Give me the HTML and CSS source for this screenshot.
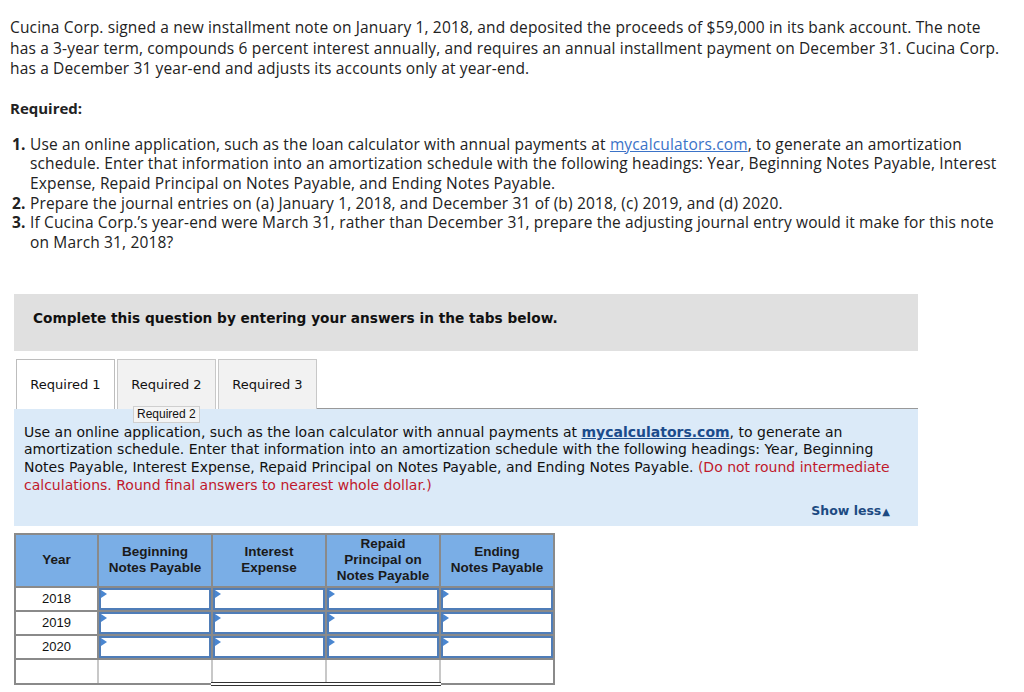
FILE: index.html
```html
<!DOCTYPE html>
<html>
<head>
<meta charset="utf-8">
<link rel="stylesheet" href="styles.css">
</head>
<body>
<div class="page">
  <p class="intro">Cucina Corp. signed a new installment note on January 1, 2018, and deposited the proceeds of $59,000 in its bank account. The note has a 3-year term, compounds 6 percent interest annually, and requires an annual installment payment on December 31. Cucina Corp. has a December 31 year-end and adjusts its accounts only at year-end.</p>
  <p class="req-title">Required:</p>
  <ol class="req-list">
    <li><span class="num">1.</span><span>Use an online application, such as the loan calculator with annual payments at <a class="link">mycalculators.com</a>, to generate an amortization schedule. Enter that information into an amortization schedule with the following headings: Year, Beginning Notes Payable, Interest Expense, Repaid Principal on Notes Payable, and Ending Notes Payable.</span></li>
    <li><span class="num">2.</span><span>Prepare the journal entries on (a) January 1, 2018, and December 31 of (b) 2018, (c) 2019, and (d) 2020.</span></li>
    <li><span class="num">3.</span><span>If Cucina Corp.’s year-end were March 31, rather than December 31, prepare the adjusting journal entry would it make for this note on March 31, 2018?</span></li>
  </ol>

  <div class="banner">Complete this question by entering your answers in the tabs below.</div>

  <div class="tabs">
    <div class="tab active">Required 1</div>
    <div class="tab">Required 2</div>
    <div class="tab">Required 3</div>
    <div class="tab-fill"></div>
  </div>

  <div class="panel">
    <div class="tooltip">Required 2</div>
    <p class="panel-text">Use an online application, such as the loan calculator with annual payments at <a class="panel-link">mycalculators.com</a>, to generate an amortization schedule. Enter that information into an amortization schedule with the following headings: Year, Beginning Notes Payable, Interest Expense, Repaid Principal on Notes Payable, and Ending Notes Payable. <span class="red">(Do not round intermediate calculations. Round final answers to nearest whole dollar.)</span></p>
    <div class="show-less">Show less<span class="tri">▲</span></div>
  </div>

  <table class="sched">
    <thead>
      <tr>
        <th class="c-year">Year</th>
        <th class="c-num">Beginning<br>Notes Payable</th>
        <th class="c-num">Interest<br>Expense</th>
        <th class="c-num">Repaid<br>Principal on<br>Notes Payable</th>
        <th class="c-num">Ending<br>Notes Payable</th>
      </tr>
    </thead>
    <tbody>
      <tr>
        <td class="yr">2018</td>
        <td class="in"><div class="box"></div></td>
        <td class="in"><div class="box"></div></td>
        <td class="in"><div class="box"></div></td>
        <td class="in"><div class="box"></div></td>
      </tr>
      <tr>
        <td class="yr">2019</td>
        <td class="in"><div class="box"></div></td>
        <td class="in"><div class="box"></div></td>
        <td class="in"><div class="box"></div></td>
        <td class="in"><div class="box"></div></td>
      </tr>
      <tr>
        <td class="yr">2020</td>
        <td class="in"><div class="box"></div></td>
        <td class="in"><div class="box"></div></td>
        <td class="in"><div class="box"></div></td>
        <td class="in"><div class="box"></div></td>
      </tr>
      <tr class="total">
        <td></td>
        <td></td>
        <td class="tot"></td>
        <td class="tot"></td>
        <td></td>
      </tr>
    </tbody>
  </table>
</div>
</body>
</html>
```

FILE: styles.css
```css
* { box-sizing: border-box; }
html, body { margin: 0; padding: 0; background: #fff; }
body {
  font-family: "Open Sans", "Liberation Sans", sans-serif;
  color: #222;
}
.page {
  width: 1024px;
  padding: 17px 0 0 0;
}
.intro {
  margin: 0 0 0 10px;
  width: 1000px;
  font-size: 15.5px;
  letter-spacing: 0.15px;
  line-height: 20.5px;
}
.req-title {
  margin: 19px 0 0 10px;
  font-weight: 700;
  font-size: 15px;
  line-height: 20px;
}
.req-list {
  list-style: none;
  margin: 17px 0 0 0;
  padding: 0 0 0 12px;
  width: 1004px;
  font-size: 15.5px;
  letter-spacing: 0.15px;
  line-height: 19.7px;
}
.req-list li {
  display: flex;
}
.num {
  font-weight: 700;
  width: 18px;
  flex: none;
}
.link {
  color: #3b73c8;
  text-decoration: underline;
}
.banner {
  margin: 41px 0 0 14px;
  width: 904px;
  height: 57px;
  background: #e0e0e0;
  font-family: "DejaVu Sans", Verdana, sans-serif;
  font-weight: 700;
  font-size: 13.7px;
  color: #111;
  padding: 16px 0 0 19px;
}
.tabs {
  display: flex;
  margin: 8px 0 0 16px;
  width: 902px;
  height: 50px;
  gap: 2px;
}
.tab {
  width: 99px;
  border: 1px solid #c8c8c8;
  border-bottom: none;
  background: #f2f2f2;
  font-family: "DejaVu Sans", Verdana, sans-serif;
  font-size: 13px;
  color: #111;
  padding-top: 17px;
  text-align: center;
}
.tab.active {
  background: #fff;
  border-color: #bdbdbd;
}
.tab-fill {
  flex: 1;
  border-bottom: 1px solid #999;
  margin-left: -2px;
}
.panel {
  position: relative;
  margin: 0 0 0 14px;
  width: 904px;
  height: 117px;
  background: #dbeaf8;
  padding: 15px 0 0 10px;
  font-family: "DejaVu Sans", Verdana, sans-serif;
  font-size: 14px;
  color: #111;
}
.tooltip {
  position: absolute;
  left: 119px;
  top: -3px;
  height: 17px;
  padding: 0 3px;
  background: #f4f4f4;
  border: 1px solid #cfcfcf;
  font-family: "Liberation Sans", Arial, sans-serif;
  font-size: 12px;
  line-height: 15px;
  color: #111;
  z-index: 2;
}
.panel-text {
  margin: 0;
  width: 880px;
  line-height: 17.7px;
}
.panel-link {
  color: #1b4c8c;
  font-weight: 700;
  text-decoration: underline;
}
.red { color: #c0192c; }
.show-less {
  position: absolute;
  right: 28px;
  bottom: 8px;
  font-weight: 700;
  font-size: 12.5px;
  color: #1d4a82;
}
.tri { font-size: 10px; margin-left: 1px; }
.sched {
  margin: 7px 0 0 14px;
  border-collapse: collapse;
  font-family: "Liberation Sans", Arial, sans-serif;
  font-size: 13px;
  color: #111;
  border: 2px solid #8a8a8a;
}
.sched th {
  background: #7aaee6;
  font-weight: 700;
  font-size: 13.5px;
  height: 53px;
  line-height: 16px;
  border: 2px solid #8a8a8a;
  padding: 0;
  color: #1a1a1a;
}
.c-year { width: 83px; }
.c-num { width: 114px; }
.sched td {
  border: 2px solid #8a8a8a;
  height: 24px;
  padding: 0;
  text-align: center;
}
.sched td.in {
  position: relative;
  padding: 0;
}
.box {
  position: relative;
  height: 22px;
  border: 2px solid #4f7db8;
  background: #fff;
}
.box::before {
  content: "";
  position: absolute;
  left: 0;
  top: 0;
  border-left: 6px solid #4a86d0;
  border-top: 4px solid transparent;
  border-bottom: 4px solid transparent;
}
.total td { height: 25px; border-color: #c8c8c8; }
.total td:first-child { border-left-color: #8a8a8a; }
.total td:last-child { border-right-color: #8a8a8a; }
.total td { border-bottom-color: #8a8a8a; }
.total td.tot {
  border-top: 2px solid #222;
  border-bottom: 4px double #333;
}
```
